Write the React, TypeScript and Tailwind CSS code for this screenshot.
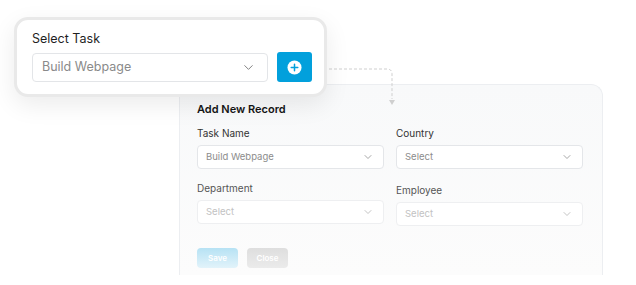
import { ChevronDown } from "lucide-react";

function SmallSelect({ value, faded }: { value: string; faded?: boolean }) {
  return (
    <div
      className={`flex h-[24px] items-center justify-between rounded-[4px] border bg-white pl-[8px] pr-[9px] ${
        faded ? "border-[#eeeff1]" : "border-[#e4e6e9]"
      }`}
    >
      <span className={`text-[9.5px] ${faded ? "text-[#c2c2c2]" : "text-[#8c8c8c]"}`}>{value}</span>
      <ChevronDown size={12} strokeWidth={1.5} className={faded ? "text-[#b0b0b0]" : "text-[#8a8a8a]"} />
    </div>
  );
}

function Field({ label, value, faded, className }: { label: string; value: string; faded?: boolean; className?: string }) {
  return (
    <div className={`flex flex-col gap-[5px] ${className ?? ""}`}>
      <span className={`text-[10px] leading-[14px] ${faded ? "text-[#555]" : "text-[#333]"}`}>{label}</span>
      <SmallSelect value={value} faded={faded} />
    </div>
  );
}

export default function App() {
  return (
    <div
      className="relative h-[285px] w-[636px] overflow-hidden bg-white"
      style={{ fontFamily: "Inter, 'Noto Sans', sans-serif" }}
    >
      {/* back card: the full form */}
      <div className="ml-[179px] mt-[84px] h-[191px] w-[424px] rounded-t-[12px] border border-b-0 border-[#eceef1] bg-gradient-to-b from-[#f8f9fa] to-[#fcfcfc] pl-[17px] pr-[19px] pt-[17px]">
        <h2 className="text-[11px] font-semibold leading-[14px] text-[#151515]">Add New Record</h2>
        <div className="mt-[10px] grid grid-cols-2 gap-x-[12px]">
          <Field label="Task Name" value="Build Webpage" />
          <Field label="Country" value="Select" />
          <Field label="Department" value="Select" faded className="mt-[12px]" />
          <Field label="Employee" value="Select" faded className="mt-[14px]" />
        </div>
        <div className="mt-[22px] flex gap-[9px]">
          <button className="h-[20px] w-[41px] rounded-[4px] bg-gradient-to-b from-[#b6e2f4] to-[#e2f3fa] text-[8px] font-semibold text-white">
            Save
          </button>
          <button className="h-[20px] w-[41px] rounded-[4px] bg-gradient-to-b from-[#dedede] to-[#ebebeb] text-[8px] font-semibold text-white">
            Close
          </button>
        </div>
      </div>

      {/* connector */}
      <svg className="pointer-events-none absolute left-0 top-0" width="636" height="285">
        <circle cx="316" cy="69" r="2.5" fill="#c9c9c9" />
        <path
          d="M319 69 H387 Q392 69 392 74 V99"
          fill="none"
          stroke="#cfcfcf"
          strokeWidth="1"
          strokeDasharray="3 2"
        />
        <path d="M389 100 L395 100 L392 105 Z" fill="#cfcfcf" />
      </svg>

      {/* front card: select task */}
      <div className="absolute left-[14px] top-[17px] w-[313px] rounded-[14px] border-[3px] border-[#e9e9e9] bg-white pb-[12px] pl-[15px] pr-[12px] pt-[10px] shadow-[0_8px_24px_rgba(0,0,0,0.08)]">
        <div className="text-[12.5px] leading-[18px] text-[#1f1f1f]">Select Task</div>
        <div className="mt-[4px] flex items-center gap-[9px]">
          <div className="flex h-[29px] w-[236px] items-center justify-between rounded-[4px] border border-[#e3e5e8] pl-[9px] pr-[11px]">
            <span className="text-[12.5px] text-[#8a8a8a]">Build Webpage</span>
            <ChevronDown size={15} strokeWidth={1.5} className="text-[#7a7a7a]" />
          </div>
          <button className="flex h-[30px] w-[35px] items-center justify-center rounded-[3px] bg-[#02a0dc]">
            <svg width="15" height="15" viewBox="0 0 16 16">
              <circle cx="8" cy="8" r="7.5" fill="white" />
              <path d="M8 4.5 V11.5 M4.5 8 H11.5" stroke="#02a0dc" strokeWidth="1.6" strokeLinecap="round" />
            </svg>
          </button>
        </div>
      </div>
    </div>
  );
}
